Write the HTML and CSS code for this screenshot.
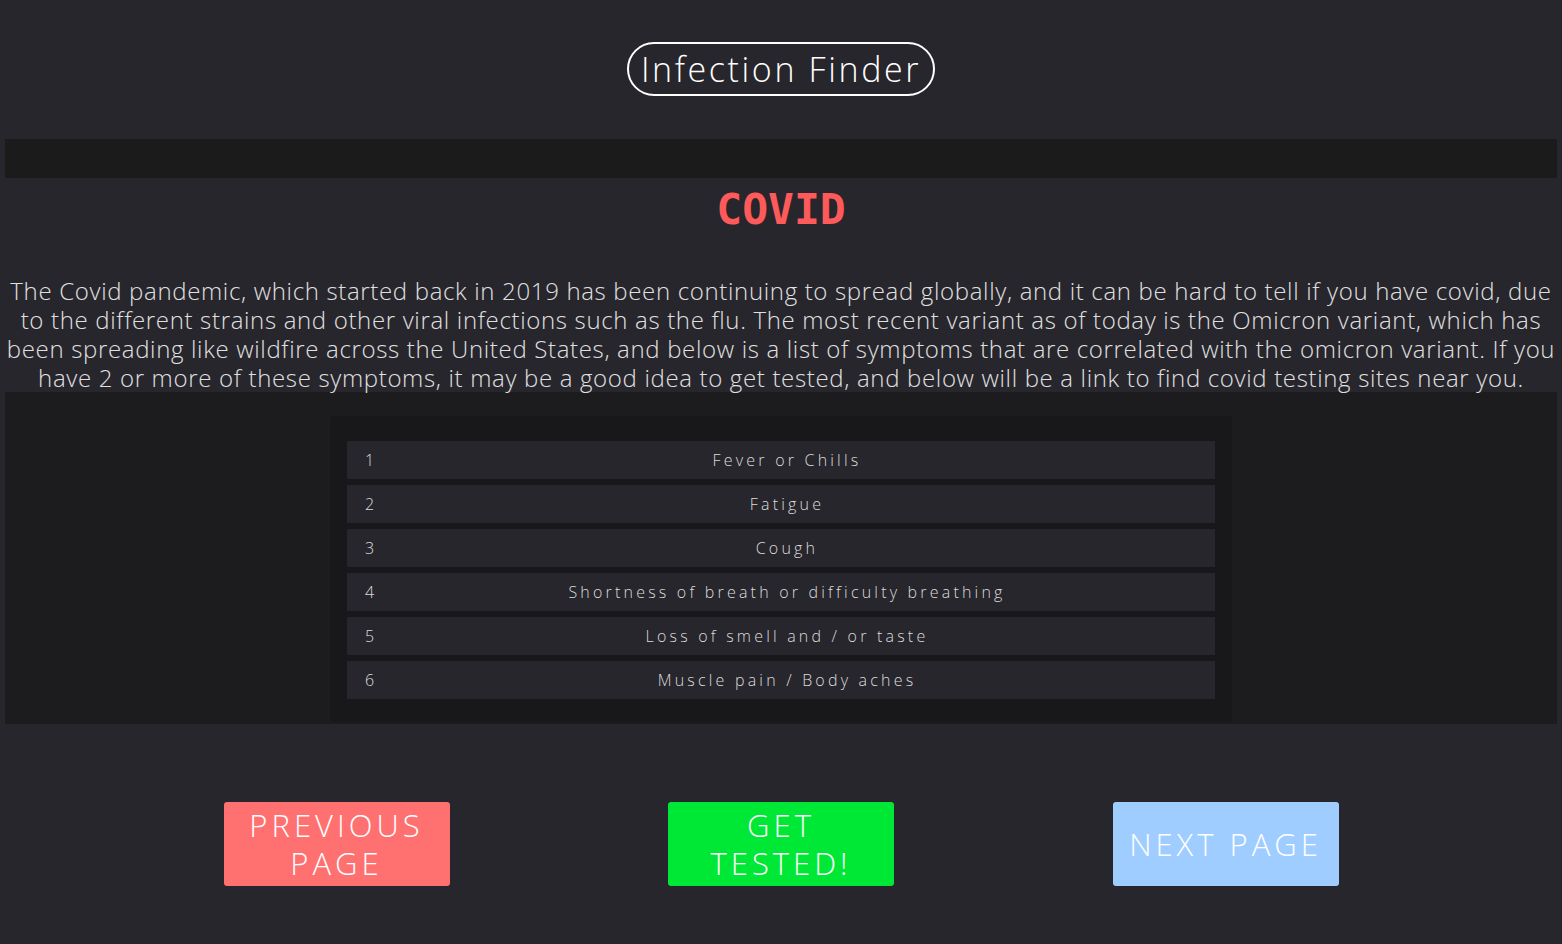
FILE: index.html
```html
<!DOCTYPE html>
<html lang="en">
  <head>
    <meta charset="UTF-8" />
    <meta name="viewport" content="width=device-width, initial-scale=1.0" />
    <title>Infection Finder - Covid</title>
    <link rel="stylesheet" href="styles.css">
  </head>
  <body>
    <!-- Header -->
    <header class="site-header">
      <h1 class="brand">Infection Finder</h1>
    </header>

    <div class="nav-bar"></div>

    <main>
      <h2 class="disease-title">COVID</h2>

      <p class="disease-text">
        The Covid pandemic, which started back in 2019 has been continuing to spread globally, and it can be hard to tell if you have covid, due to the different strains and other viral infections such as the flu. The most recent variant as of today is the Omicron variant, which has been spreading like wildfire across the United States, and below is a list of symptoms that are correlated with the omicron variant. If you have 2 or more of these symptoms, it may be a good idea to get tested, and below will be a link to find covid testing sites near you.
      </p>

      <!-- Symptoms -->
      <section class="symptoms">
        <div class="symptom-box">
          <div class="symptom-row"><span class="num">1</span><span class="name">Fever or Chills</span></div>
          <div class="symptom-row"><span class="num">2</span><span class="name">Fatigue</span></div>
          <div class="symptom-row"><span class="num">3</span><span class="name">Cough</span></div>
          <div class="symptom-row"><span class="num">4</span><span class="name">Shortness of breath or difficulty breathing</span></div>
          <div class="symptom-row"><span class="num">5</span><span class="name">Loss of smell and / or taste</span></div>
          <div class="symptom-row"><span class="num">6</span><span class="name">Muscle pain / Body aches</span></div>
        </div>
      </section>

      <div class="page-buttons">
        <a class="btn btn-prev" href="#">Previous Page</a>
        <a class="btn btn-test" href="#">Get Tested!</a>
        <a class="btn btn-next" href="#">Next Page</a>
      </div>
    </main>
  </body>
</html>
```

FILE: styles.css
```css
* {
  box-sizing: border-box;
}

body {
  margin: 0 5px;
  background-color: #27262c;
  color: #e2e2e2;
  font-family: "Open Sans", "Noto Sans", sans-serif;
  font-weight: 300;
}

.site-header {
  display: flex;
  justify-content: center;
  padding-top: 42px;
}

.brand {
  margin: 0;
  height: 54px;
  padding: 0 12px;
  border: 2px solid #ffffff;
  border-radius: 28px;
  color: #ffffff;
  font-size: 34px;
  font-weight: 300;
  line-height: 50px;
  letter-spacing: 2.6px;
}

.nav-bar {
  margin-top: 43px;
  height: 39px;
  background: #1b1b1b;
}

.disease-title {
  margin: 0;
  padding-top: 2px;
  height: 58px;
  text-align: center;
  color: #ff5a5a;
  font-family: "DejaVu Sans Mono", "Liberation Mono", monospace;
  font-size: 43px;
  font-weight: bold;
  line-height: 58px;
}

.disease-text {
  margin: 40px 0 0;
  text-align: center;
  font-size: 24px;
  line-height: 29px;
  letter-spacing: 0.66px;
  color: #e0e0e0;
}

.symptoms {
  background: #1c1c1e;
  padding: 24px 0 2px;
}

.symptom-box {
  width: 902px;
  margin: 0 auto;
  padding: 25px 17px 23px;
  background: #18181a;
  border-radius: 4px;
  display: flex;
  flex-direction: column;
  gap: 6px;
}

.symptom-row {
  display: grid;
  grid-template-columns: 46px 1fr 34px;
  align-items: center;
  height: 38px;
  background: #27262c;
  font-size: 16px;
  color: #dcdcdc;
}

.symptom-row .num {
  padding-left: 18px;
  letter-spacing: 1px;
}

.symptom-row .name {
  text-align: center;
  letter-spacing: 3.2px;
}

.page-buttons {
  display: flex;
  justify-content: space-evenly;
  margin-top: 78px;
}

.btn {
  display: flex;
  align-items: center;
  justify-content: center;
  width: 226px;
  height: 84px;
  border-radius: 3px;
  color: #ffffff;
  text-decoration: none;
  text-align: center;
  text-transform: uppercase;
  font-size: 31px;
  font-weight: 300;
  line-height: 38px;
  letter-spacing: 4px;
}

.btn-prev {
  background: #ff7070;
  padding: 0 12px;
}

.btn-test {
  background: #00e836;
  padding: 0 30px;
}

.btn-next {
  background: #9fcdff;
  padding: 0 4px;
}
```
